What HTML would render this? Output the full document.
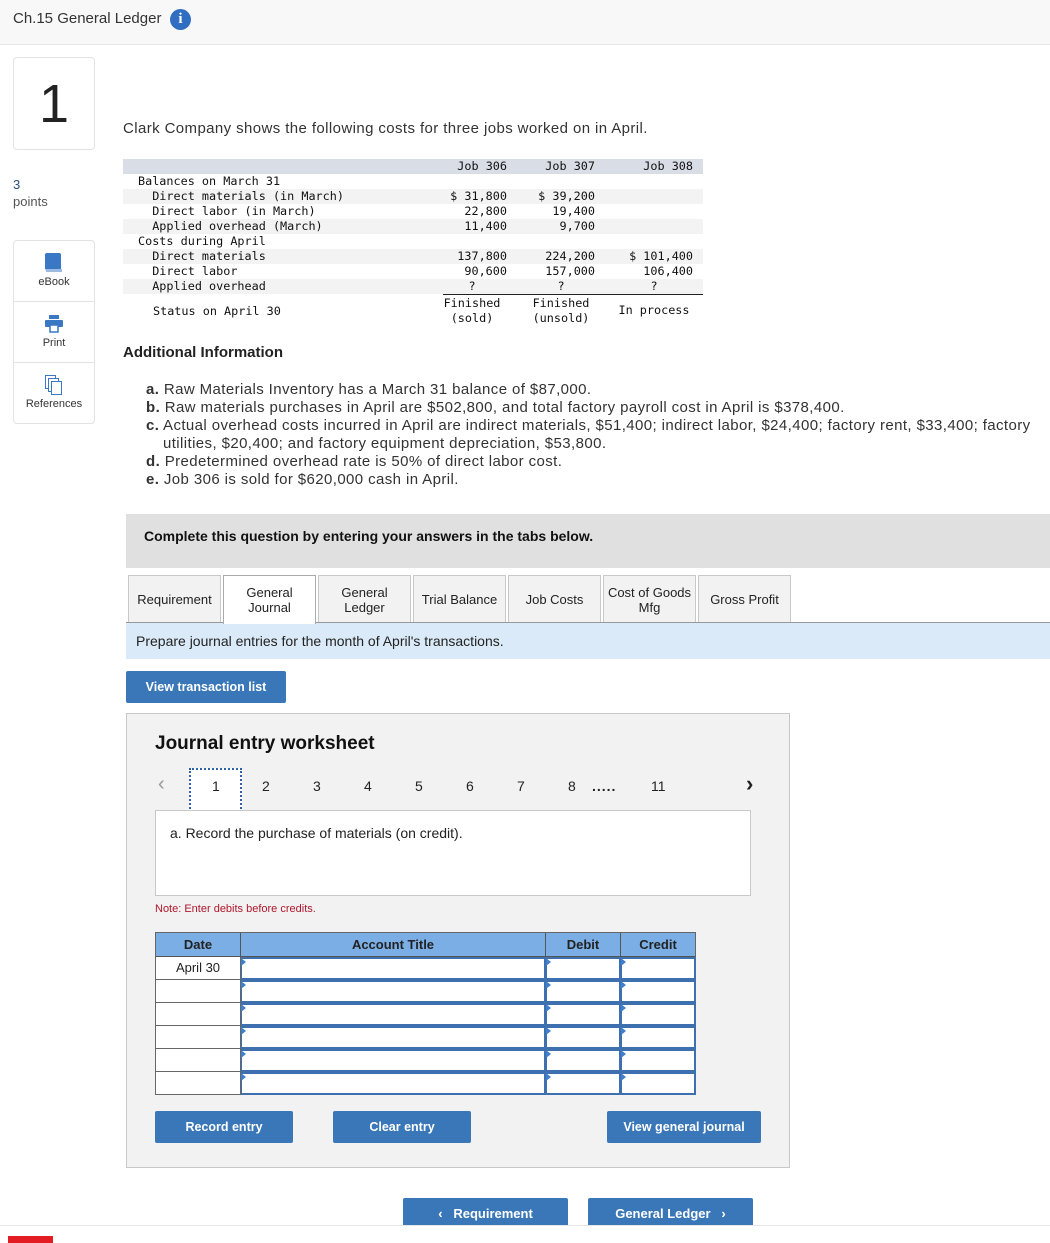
<!DOCTYPE html>
<html><head><meta charset="utf-8"><style>
*{margin:0;padding:0;box-sizing:border-box}
body{width:1050px;height:1243px;position:relative;overflow:hidden;background:#fff;font-family:"Liberation Sans",sans-serif;color:#222}
.a{position:absolute}
.mono{font-family:"DejaVu Sans Mono","Liberation Mono",monospace;font-size:11.8px;white-space:pre;color:#111}
.tab{position:absolute;top:575px;height:48px;width:93px;background:#f2f2f2;border:1px solid #c8c8c8;border-bottom:none;font-size:13px;display:flex;align-items:center;justify-content:center;text-align:center;line-height:15px;color:#222}
.btn{position:absolute;background:#3a77b9;color:#fff;font-weight:bold;font-size:12.5px;display:flex;align-items:center;justify-content:center;border-radius:2px;font-family:"Liberation Sans Narrow","Liberation Sans",sans-serif}
.stripe{position:absolute;left:123px;width:580px;height:15px;background:#f3f3f3}
.inp{position:absolute;background:#fff;border:2px solid #3e6fae}
.inp:before{content:"";position:absolute;left:-1px;top:-1px;border-left:5px solid #3e7fce;border-top:4px solid transparent;border-bottom:4px solid transparent}
.pg{position:absolute;top:778px;font-size:14px;color:#222}
</style></head><body>
<div class="a" style="left:0;top:0;width:1050px;height:45px;background:#f8f8f8;border-bottom:1px solid #e6e6e6"></div>
<div class="a" style="left:13px;top:10px;font-size:15px;color:#333">Ch.15 General Ledger</div>
<div class="a" style="left:170px;top:9px;width:21px;height:21px;border-radius:50%;background:#2f6ec0;color:#fff;font-weight:bold;font-size:15px;text-align:center;line-height:21px;font-family:'Liberation Serif',serif">i</div>

<div class="a" style="left:13px;top:57px;width:82px;height:93px;border:1px solid #e3e3e3;border-radius:4px;text-align:center;font-size:54px;line-height:92px;color:#222">1</div>
<div class="a" style="left:13px;top:177px;font-size:13px;color:#2a4f7c">3</div>
<div class="a" style="left:13px;top:194px;font-size:13px;color:#555">points</div>
<div class="a" style="left:13px;top:240px;width:82px;height:184px;border:1px solid #e3e3e3;border-radius:4px"></div>
<div class="a" style="left:14px;top:301px;width:80px;height:1px;background:#e3e3e3"></div>
<div class="a" style="left:14px;top:362px;width:80px;height:1px;background:#e3e3e3"></div>
<svg class="a" style="left:44px;top:252px" width="20" height="22"><rect x="1" y="1" width="16" height="17" rx="2" fill="#3a77c4"/><rect x="2" y="17" width="16" height="3" fill="#9dbbe0"/></svg>
<div class="a" style="left:14px;top:276px;width:80px;text-align:center;font-size:11px;color:#333">eBook</div>
<svg class="a" style="left:44px;top:314px" width="20" height="20"><rect x="5" y="1" width="10" height="4" fill="#3a77c4"/><rect x="1" y="6" width="18" height="7" rx="1" fill="#3a77c4"/><rect x="6" y="11" width="8" height="7" fill="#fff" stroke="#3a77c4" stroke-width="1.5"/></svg>
<div class="a" style="left:14px;top:337px;width:80px;text-align:center;font-size:11px;color:#333">Print</div>
<svg class="a" style="left:44px;top:374px" width="20" height="22"><rect x="1.5" y="1.5" width="10" height="13" fill="#fff" stroke="#3a77c4"/><rect x="4.5" y="4.5" width="10" height="13" fill="#fff" stroke="#3a77c4"/><rect x="7.5" y="7.5" width="10" height="13" fill="#fff" stroke="#3a77c4"/></svg>
<div class="a" style="left:14px;top:398px;width:80px;text-align:center;font-size:11px;color:#333">References</div>

<div class="a" style="left:123px;top:120px;font-size:15px;color:#333;letter-spacing:0.4px">Clark Company shows the following costs for three jobs worked on in April.</div>

<div class="a" style="left:123px;top:159px;width:580px;height:15px;background:#d9dde6"></div>
<div class="stripe" style="top:189px"></div><div class="stripe" style="top:219px"></div><div class="stripe" style="top:249px"></div><div class="stripe" style="top:279px"></div>
<div class="a" style="left:443px;top:294px;width:260px;height:1px;background:#222"></div>
<div class="a mono" style="left:138px;top:174px;line-height:15px">Balances on March 31
  Direct materials (in March)
  Direct labor (in March)
  Applied overhead (March)
Costs during April
  Direct materials
  Direct labor
  Applied overhead</div>
<div class="a mono" style="left:153px;top:304px;line-height:15px">Status on April 30</div>
<div class="a mono" style="left:420px;top:159px;width:87px;text-align:right;line-height:15px">Job 306

$ 31,800
22,800
11,400

137,800
90,600</div>
<div class="a mono" style="left:510px;top:159px;width:85px;text-align:right;line-height:15px">Job 307

$ 39,200
19,400
9,700

224,200
157,000</div>
<div class="a mono" style="left:600px;top:159px;width:93px;text-align:right;line-height:15px">Job 308





$ 101,400
106,400</div>
<div class="a mono" style="left:442px;top:279px;width:60px;text-align:center;line-height:15px">?
<span style="position:relative;top:2px">Finished</span>
<span style="position:relative;top:2px">(sold)</span></div>
<div class="a mono" style="left:529px;top:279px;width:64px;text-align:center;line-height:15px">?
<span style="position:relative;top:2px">Finished</span>
<span style="position:relative;top:2px">(unsold)</span></div>
<div class="a mono" style="left:618px;top:279px;width:72px;text-align:center;line-height:15px">?

<span style="position:relative;top:-6px">In process</span></div>

<div class="a" style="left:123px;top:344px;font-size:15px;font-weight:bold;color:#222">Additional Information</div>
<div class="a" style="left:146px;top:381px;font-size:15px;line-height:18px;color:#333;white-space:nowrap;letter-spacing:0.4px">
<b>a.</b> Raw Materials Inventory has a March 31 balance of $87,000.<br>
<b>b.</b> Raw materials purchases in April are $502,800, and total factory payroll cost in April is $378,400.<br>
<b>c.</b> Actual overhead costs incurred in April are indirect materials, $51,400; indirect labor, $24,400; factory rent, $33,400; factory<br>
<span style="padding-left:17px">utilities, $20,400; and factory equipment depreciation, $53,800.</span><br>
<b>d.</b> Predetermined overhead rate is 50% of direct labor cost.<br>
<b>e.</b> Job 306 is sold for $620,000 cash in April.</div>

<div class="a" style="left:126px;top:514px;width:924px;height:54px;background:#e0e0e0"></div>
<div class="a" style="left:144px;top:528px;font-size:14px;font-weight:bold;color:#111">Complete this question by entering your answers in the tabs below.</div>

<div class="tab" style="left:128px">Requirement</div>
<div class="tab" style="left:223px;background:#fff;border-color:#aaa;height:49px;z-index:2">General<br>Journal</div>
<div class="tab" style="left:318px">General<br>Ledger</div>
<div class="tab" style="left:413px">Trial Balance</div>
<div class="tab" style="left:508px">Job Costs</div>
<div class="tab" style="left:603px">Cost of Goods<br>Mfg</div>
<div class="tab" style="left:698px">Gross Profit</div>
<div class="a" style="left:126px;top:622px;width:924px;height:37px;background:#dbeaf8;border-top:1px solid #999"></div>
<div class="a" style="left:136px;top:633px;font-size:14px;color:#222">Prepare journal entries for the month of April's transactions.</div>
<div class="btn" style="left:126px;top:671px;width:160px;height:32px">View transaction list</div>

<div class="a" style="left:126px;top:713px;width:664px;height:455px;background:#f2f2f2;border:1px solid #c8c8c8"></div>
<div class="a" style="left:155px;top:733px;font-size:19px;font-weight:bold;color:#111">Journal entry worksheet</div>
<div class="pg" style="left:158px;top:773px;font-size:20px;color:#999">‹</div>
<div class="a" style="left:189px;top:768px;width:53px;height:44px;border:2px dotted #2d62a8;background:#fff"></div>
<div class="pg" style="left:212px">1</div><div class="pg" style="left:262px">2</div><div class="pg" style="left:313px">3</div><div class="pg" style="left:364px">4</div><div class="pg" style="left:415px">5</div><div class="pg" style="left:466px">6</div><div class="pg" style="left:517px">7</div><div class="pg" style="left:568px">8</div>
<div class="pg" style="left:592px;font-weight:bold;letter-spacing:1px">.....</div>
<div class="pg" style="left:651px">11</div>
<div class="pg" style="left:746px;top:771px;font-size:22px;font-weight:bold;color:#222">›</div>
<div class="a" style="left:155px;top:810px;width:596px;height:86px;background:#fff;border:1px solid #c8c8c8"></div>
<div class="a" style="left:170px;top:825px;font-size:14px;color:#222">a. Record the purchase of materials (on credit).</div>
<div class="a" style="left:155px;top:903px;font-size:11px;color:#b0162a">Note: Enter debits before credits.</div>

<div class="a" style="left:155px;top:932px;width:541px;height:163px;background:#fff;border:1px solid #666"></div>
<div class="a" style="left:156px;top:933px;width:539px;height:24px;background:#7aaee4;border-bottom:1px solid #555"></div>
<div class="a" style="left:240px;top:933px;width:1px;height:24px;background:#555"></div>
<div class="a" style="left:545px;top:933px;width:1px;height:24px;background:#555"></div>
<div class="a" style="left:620px;top:933px;width:1px;height:24px;background:#555"></div>
<div class="a" style="left:156px;top:937px;width:84px;text-align:center;font-size:13px;font-weight:bold;color:#222;font-family:'Liberation Sans Narrow','Liberation Sans',sans-serif">Date</div>
<div class="a" style="left:241px;top:937px;width:304px;text-align:center;font-size:13px;font-weight:bold;color:#222;font-family:'Liberation Sans Narrow','Liberation Sans',sans-serif">Account Title</div>
<div class="a" style="left:546px;top:937px;width:74px;text-align:center;font-size:13px;font-weight:bold;color:#222;font-family:'Liberation Sans Narrow','Liberation Sans',sans-serif">Debit</div>
<div class="a" style="left:621px;top:937px;width:74px;text-align:center;font-size:13px;font-weight:bold;color:#222;font-family:'Liberation Sans Narrow','Liberation Sans',sans-serif">Credit</div>
<div class="a" style="left:156px;top:960px;width:84px;text-align:center;font-size:13px;color:#222">April 30</div>
<div id="rows"></div>
<script>
var h='';for(var i=0;i<6;i++){var t=957+i*23;
if(i>0)h+='<div class="a" style="left:156px;top:'+(t-1)+'px;width:84px;height:1px;background:#666"></div>';
h+='<div class="inp" style="left:240px;top:'+t+'px;width:306px;height:23px"></div><div class="inp" style="left:545px;top:'+t+'px;width:76px;height:23px"></div><div class="inp" style="left:620px;top:'+t+'px;width:76px;height:23px"></div>';}
document.getElementById('rows').innerHTML=h;
</script>
<div class="a" style="left:240px;top:957px;width:1px;height:138px;background:#666"></div>

<div class="btn" style="left:155px;top:1111px;width:138px;height:32px">Record entry</div>
<div class="btn" style="left:333px;top:1111px;width:138px;height:32px">Clear entry</div>
<div class="btn" style="left:607px;top:1111px;width:154px;height:32px">View general journal</div>

<div class="btn" style="left:403px;top:1198px;width:165px;height:32px;align-items:flex-start;padding-top:8px;font-size:13px">‹&nbsp;&nbsp;&nbsp;Requirement</div>
<div class="btn" style="left:588px;top:1198px;width:165px;height:32px;align-items:flex-start;padding-top:8px;font-size:13px">General Ledger&nbsp;&nbsp;&nbsp;›</div>
<div class="a" style="left:0;top:1225px;width:1050px;height:18px;background:#fff;border-top:1px solid #e6e6e6"></div>
<div class="a" style="left:8px;top:1236px;width:45px;height:7px;background:#e31b23"></div>
</body></html>
